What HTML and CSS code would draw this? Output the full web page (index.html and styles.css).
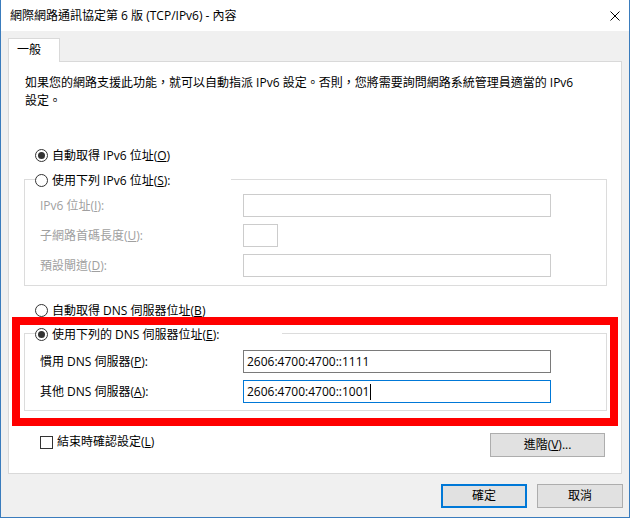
FILE: index.html
```html
<!DOCTYPE html>
<html lang="zh-Hant">
<head>
<meta charset="utf-8">
<title>網際網路通訊協定第 6 版 (TCP/IPv6) - 內容</title>
<link rel="stylesheet" href="styles.css">
</head>
<body>
<div class="window">
  <div class="titlebar">
    <span class="title">網際網路通訊協定第 6 版 (TCP/IPv6) - 內容</span>
    <svg class="close" width="10" height="10" viewBox="0 0 10 10"><path d="M0.5 0.5 L9.5 9.5 M9.5 0.5 L0.5 9.5" stroke="#000" stroke-width="1" fill="none"/></svg>
  </div>
  <div class="body">
    <div class="tabs"><div class="tab">一般</div></div>
    <div class="panel">
      <p class="desc">如果您的網路支援此功能，就可以自動指派 IPv6 設定。否則，您將需要詢問網路系統管理員適當的 IPv6<br>設定。</p>

      <div class="radio-row first"><span class="radio checked"></span><span>自動取得 IPv6 位址(<u>O</u>)</span></div>
      <div class="group group-ip">
        <div class="legend legend-ip"><span class="radio"></span><span>使用下列 IPv6 位址(<u>S</u>):</span></div>
        <div class="field first disabled"><span class="label">IPv6 位址(<u>I</u>):</span><span class="input"></span></div>
        <div class="field disabled"><span class="label">子網路首碼長度(<u>U</u>):</span><span class="input short"></span></div>
        <div class="field disabled"><span class="label">預設閘道(<u>D</u>):</span><span class="input"></span></div>
      </div>

      <div class="radio-row dns-auto"><span class="radio"></span><span>自動取得 DNS 伺服器位址(<u>B</u>)</span></div>
      <div class="group group-dns">
        <div class="legend legend-dns"><span class="radio checked"></span><span>使用下列的 DNS 伺服器位址(<u>E</u>):</span></div>
        <div class="field first"><span class="label">慣用 DNS 伺服器(<u>P</u>):</span><span class="input active">2606:4700:4700::1111</span></div>
        <div class="field"><span class="label">其他 DNS 伺服器(<u>A</u>):</span><span class="input focused">2606:4700:4700::1001<span class="caret"></span></span></div>
      </div>

      <div class="bottom-row">
        <div class="check-row"><span class="checkbox"></span><span>結束時確認設定(<u>L</u>)</span></div>
        <div class="btn adv">進階(<u>V</u>)...</div>
      </div>
    </div>
    <div class="buttons">
      <div class="btn default">確定</div>
      <div class="btn">取消</div>
    </div>
  </div>
  <div class="annot"></div>
</div>
</body>
</html>
```
FILE: styles.css
```css
* { box-sizing: border-box; }
html, body { margin: 0; padding: 0; }
body {
  font-family: "Open Sans", "Noto Sans CJK TC", sans-serif;
  font-size: 12px;
  color: #000;
  background: #fff;
}
.window {
  position: relative;
  width: 630px;
  height: 518px;
  border: 1px solid #3a7cbd;
  border-top: 0;
  background: #f0f0f0;
  display: flex;
  flex-direction: column;
}
.titlebar {
  height: 31px;
  flex: none;
  background: #fff;
  display: flex;
  align-items: center;
  justify-content: space-between;
  padding: 0 9px 0 9px;
}
.title { line-height: 16px; white-space: nowrap; }
.close { display: block; }

.body {
  flex: 1;
  display: flex;
  flex-direction: column;
  padding: 7px 7px 9px 7px;
}
.tabs {
  display: flex;
  height: 24px;
  margin-bottom: -1px;
  position: relative;
  z-index: 1;
}
.tab {
  width: 52px;
  height: 24px;
  background: #fff;
  border: 1px solid #d9d9d9;
  border-bottom: 0;
  padding-left: 8px;
  line-height: 22px;
}
.panel {
  height: 413px;
  flex: none;
  background: #fff;
  border: 1px solid #d9d9d9;
  padding-top: 12px;
}
.desc {
  margin: 0 0 0 16px;
  line-height: 18px;
  white-space: nowrap;
}
.radio-row {
  display: flex;
  align-items: center;
  height: 20px;
  margin-left: 26px;
}
.radio-row.first { margin-top: 35px; }
.radio-row.dns-auto { margin-top: 14px; }

.radio {
  width: 13px;
  height: 13px;
  border: 1px solid #333;
  border-radius: 50%;
  margin-right: 4px;
  flex: none;
  display: flex;
  align-items: center;
  justify-content: center;
  background: #fff;
}
.radio.checked::after {
  content: "";
  width: 7px;
  height: 7px;
  border-radius: 50%;
  background: #333;
}
.group {
  margin: 14px 14px 0 15px;
  border: 1px solid #dcdcdc;
  padding: 0 0 8px 15px;
}
.group-dns {
  margin-top: 13px;
  padding-bottom: 7px;
}
.legend {
  display: flex;
  align-items: center;
  height: 20px;
  margin: -10px 0 0 -5px;
  background: #fff;
}
.legend-ip { width: 196px; }
.legend-dns { width: 247px; }

.field {
  display: flex;
  align-items: center;
  height: 23px;
  margin-top: 7px;
}
.field.first { margin-top: 4px; }
.group-dns .field.first { margin-top: 6px; }
.label {
  width: 203px;
  flex: none;
  line-height: 16px;
}
.disabled .label { color: #a0a0a0; }
.input {
  width: 308px;
  height: 23px;
  flex: none;
  border: 1px solid #cccccc;
  background: #fff;
  padding-left: 3px;
  line-height: 21px;
  display: flex;
  align-items: center;
  white-space: nowrap;
}
.input.short { width: 35px; }
.input.active { border-color: #7a7a7a; }
.input.focused { border-color: #0078d7; }
.caret {
  display: inline-block;
  width: 1px;
  height: 16px;
  background: #000;
  margin-left: 1px;
}

.bottom-row {
  display: flex;
  align-items: center;
  justify-content: space-between;
  margin: 22px 16px 0 31px;
}
.check-row {
  display: flex;
  align-items: center;
  line-height: 16px;
  margin-top: -6px;
}
.checkbox {
  width: 13px;
  height: 13px;
  border: 1px solid #333;
  background: #fff;
  margin-right: 4px;
  flex: none;
}
.btn {
  width: 86px;
  height: 24px;
  background: #e1e1e1;
  border: 1px solid #adadad;
  display: flex;
  align-items: center;
  justify-content: center;
  line-height: 16px;
}
.btn.adv { width: 115px; }
.btn.default { border: 2px solid #0078d7; }
.buttons {
  display: flex;
  justify-content: flex-end;
  gap: 10px;
  margin-top: 10px;
  margin-right: -1px;
}
.annot {
  position: absolute;
  left: 11px;
  top: 317px;
  width: 606px;
  height: 109px;
  border: 8px solid #ff0000;
  pointer-events: none;
}
```
